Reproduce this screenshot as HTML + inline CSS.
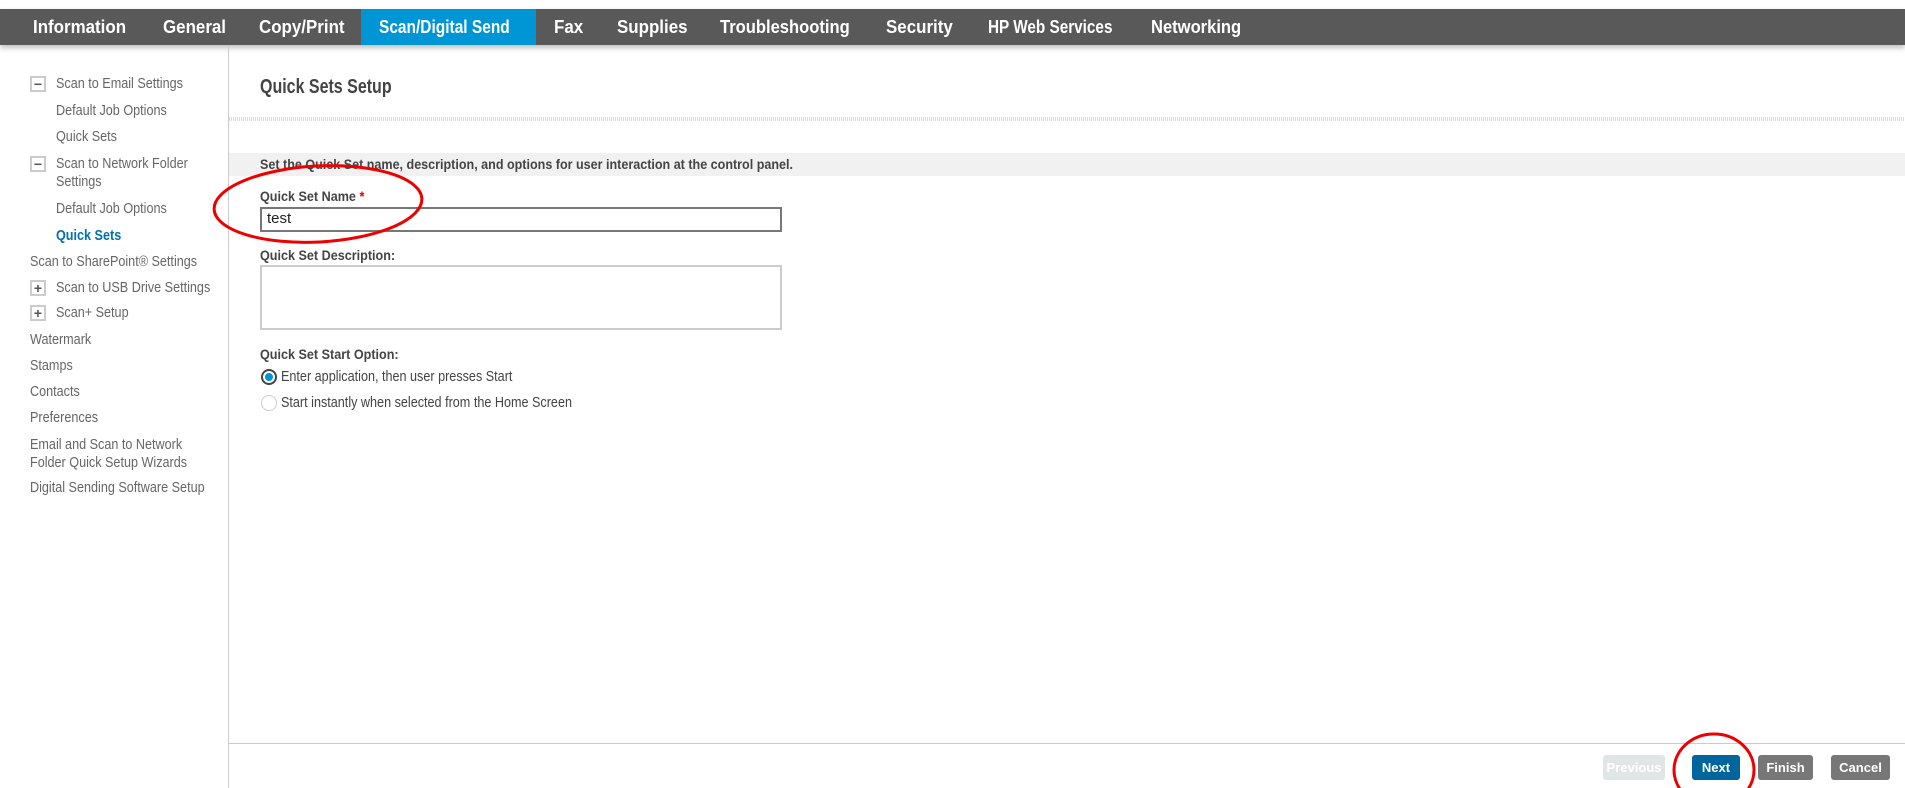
<!DOCTYPE html>
<html><head><meta charset="utf-8"><style>
*{margin:0;padding:0;box-sizing:border-box}
body{width:1905px;height:788px;overflow:hidden;background:#fff;position:relative;font-family:"Liberation Sans",sans-serif;color:#555}
.a{position:absolute;white-space:nowrap}
#nav{position:absolute;left:0;top:9px;width:1905px;height:36px;background:#595959;box-shadow:0 3px 5px rgba(0,0,0,.25)}
#nav .t{position:absolute;top:0;line-height:36px;color:#fff;font-weight:bold;font-size:18px;transform:scaleX(.94);transform-origin:0 50%}
#act{position:absolute;left:361px;top:0;width:175px;height:36px;background:#0096d6}
.s{font-size:14.5px;color:#666;line-height:18px;transform:scaleX(.87);transform-origin:0 0}
.box{position:absolute;width:16px;height:16px;border:2px solid #ccc;font-size:14px;line-height:12px;text-align:center;color:#555;font-weight:bold}
.lbl{font-weight:bold;font-size:14px;color:#444;transform:scaleX(.9);transform-origin:0 0}
.btn{position:absolute;top:755px;height:25px;border-radius:3px;color:#fff;font-weight:bold;font-size:13px;line-height:25px;text-align:center}
</style></head><body>
<div id="nav"><div id="act"></div>
<span class="t" style="left:33px">Information</span>
<span class="t" style="left:163px">General</span>
<span class="t" style="left:259px">Copy/Print</span>
<span class="t" style="left:379px;transform:scaleX(.86)">Scan/Digital Send</span>
<span class="t" style="left:554px">Fax</span>
<span class="t" style="left:617px">Supplies</span>
<span class="t" style="left:720px;transform:scaleX(.92)">Troubleshooting</span>
<span class="t" style="left:886px">Security</span>
<span class="t" style="left:988px;transform:scaleX(.85)">HP Web Services</span>
<span class="t" style="left:1151px;transform:scaleX(.92)">Networking</span>
</div>
<div class="a" style="left:228px;top:45px;width:1px;height:743px;background:#ccc"></div>

<div class="box" style="left:30px;top:76px">−</div>
<div class="a s" style="left:56px;top:75px">Scan to Email Settings</div>
<div class="a s" style="left:56px;top:102px">Default Job Options</div>
<div class="a s" style="left:56px;top:128px">Quick Sets</div>
<div class="box" style="left:30px;top:156px">−</div>
<div class="a s" style="left:56px;top:155px">Scan to Network Folder<br>Settings</div>
<div class="a s" style="left:56px;top:200px">Default Job Options</div>
<div class="a s" style="left:56px;top:227px;color:#0171ad;font-weight:bold">Quick Sets</div>
<div class="a s" style="left:30px;top:253px">Scan to SharePoint® Settings</div>
<div class="box" style="left:30px;top:280px">+</div>
<div class="a s" style="left:56px;top:279px">Scan to USB Drive Settings</div>
<div class="box" style="left:30px;top:305px">+</div>
<div class="a s" style="left:56px;top:304px">Scan+ Setup</div>
<div class="a s" style="left:30px;top:331px">Watermark</div>
<div class="a s" style="left:30px;top:357px">Stamps</div>
<div class="a s" style="left:30px;top:383px">Contacts</div>
<div class="a s" style="left:30px;top:409px">Preferences</div>
<div class="a s" style="left:30px;top:436px">Email and Scan to Network<br>Folder Quick Setup Wizards</div>
<div class="a s" style="left:30px;top:479px">Digital Sending Software Setup</div>

<div class="a" style="left:260px;top:76px;font-size:20px;font-weight:700;color:#444;transform:scaleX(.8);transform-origin:0 0">Quick Sets Setup</div>
<div class="a" style="left:229px;top:117px;width:1676px;height:4px;background:repeating-linear-gradient(90deg,#ddd 0 1px,#fff 1px 2px)"></div>
<div class="a" style="left:229px;top:153px;width:1676px;height:23px;background:#f1f1f1"></div>
<div class="a lbl" style="left:260px;top:157px;font-size:13.5px;transform:scaleX(.93)">Set the Quick Set name, description, and options for user interaction at the control panel.</div>
<div class="a lbl" style="left:260px;top:188px">Quick Set Name <span style="color:#d00">*</span></div>
<div class="a" style="left:260px;top:207px;width:522px;height:25px;border:2px solid #777;font-size:15px;color:#222;padding-left:5px;line-height:20px">test</div>
<div class="a lbl" style="left:260px;top:247px">Quick Set Description:</div>
<div class="a" style="left:260px;top:265px;width:522px;height:65px;border:2px solid #ccc"></div>
<div class="a lbl" style="left:260px;top:346px">Quick Set Start Option:</div>
<div class="a" style="left:261px;top:369px;width:16px;height:16px;border-radius:50%;border:2px solid #444;background:#fff"><div style="margin:2px;width:8px;height:8px;border-radius:50%;background:#0096d6"></div></div>
<div class="a s" style="left:281px;top:368px;color:#444">Enter application, then user presses Start</div>
<div class="a" style="left:261px;top:395px;width:16px;height:16px;border-radius:50%;border:1px solid #ccc"></div>
<div class="a s" style="left:281px;top:394px;color:#444">Start instantly when selected from the Home Screen</div>

<div class="a" style="left:229px;top:743px;width:1676px;height:1px;background:#ccc"></div>
<div class="btn" style="left:1603px;width:62px;background:#e2e5e6">Previous</div>
<div class="btn" style="left:1692px;width:48px;background:#00659c">Next</div>
<div class="btn" style="left:1758px;width:55px;background:#777">Finish</div>
<div class="btn" style="left:1831px;width:59px;background:#777">Cancel</div>

<svg class="a" style="left:0;top:0" width="1905" height="788">
<ellipse cx="318" cy="204" rx="104" ry="38" fill="none" stroke="#e00" stroke-width="3" transform="rotate(-3 318 204)"/>
<ellipse cx="1714" cy="770" rx="40" ry="36" fill="none" stroke="#e00" stroke-width="3"/>
</svg>
</body></html>
